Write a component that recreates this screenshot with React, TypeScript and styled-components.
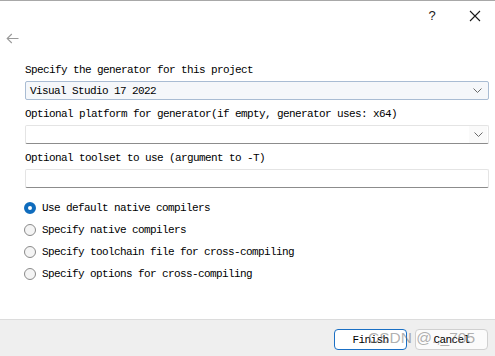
import styled, { createGlobalStyle } from "styled-components";

const GlobalStyle = createGlobalStyle`
  html, body {
    margin: 0;
    padding: 0;
    background: #ffffff;
  }
  * {
    box-sizing: border-box;
  }
`;

const mono = `"Liberation Mono", "DejaVu Sans Mono", monospace`;

export default function App() {
  const options = [
    "Use default native compilers",
    "Specify native compilers",
    "Specify toolchain file for cross-compiling",
    "Specify options for cross-compiling",
  ];

  return (
    <Window>
      <GlobalStyle />
      <TitleBar>
        <HelpButton>?</HelpButton>
        <CloseButton>
          <svg width="12" height="12" viewBox="0 0 12 12">
            <path d="M1 1 L11 11 M11 1 L1 11" stroke="#1a1a1a" strokeWidth="1.1" fill="none" />
          </svg>
        </CloseButton>
      </TitleBar>

      <BackRow>
        <svg width="13" height="11" viewBox="0 0 13 11">
          <path d="M12.5 5.5 H1.2 M5.8 1 L1.2 5.5 L5.8 10" stroke="#9a9a9a" strokeWidth="1.1" fill="none" />
        </svg>
      </BackRow>

      <Content>
        <Field>
          <Label>Specify the generator for this project</Label>
          <Select focused>
            <span>Visual Studio 17 2022</span>
            <Chevron />
          </Select>
        </Field>

        <Field>
          <Label>Optional platform for generator(if empty, generator uses: x64)</Label>
          <Select>
            <span />
            <DropButton>
              <Chevron />
            </DropButton>
          </Select>
        </Field>

        <Field>
          <Label>Optional toolset to use (argument to -T)</Label>
          <TextInput />
        </Field>

        <RadioList>
          {options.map((o, i) => (
            <RadioRow key={o}>
              <RadioDot checked={i === 0} />
              <RadioText>{o}</RadioText>
            </RadioRow>
          ))}
        </RadioList>
      </Content>

      <Footer>
        <Button primary>Finish</Button>
        <Button>Cancel</Button>
        <Watermark>CSDN @.,_705</Watermark>
      </Footer>
    </Window>
  );
}

const Chevron = () => (
  <svg width="9" height="5" viewBox="0 0 9 5">
    <path d="M0.5 0.5 L4.5 4.5 L8.5 0.5" stroke="#6a6a6a" strokeWidth="1" fill="none" />
  </svg>
);

const Window = styled.div`
  width: 495px;
  height: 356px;
  display: flex;
  flex-direction: column;
  border-top: 1px solid #a8a8a8;
  background: #ffffff;
  overflow: hidden;
`;

const TitleBar = styled.div`
  height: 29px;
  display: flex;
  justify-content: flex-end;
  align-items: center;
  padding-right: 8px;
`;

const HelpButton = styled.div`
  width: 34px;
  text-align: center;
  font-family: "Liberation Sans", Arial, sans-serif;
  font-size: 13px;
  color: #1a1a1a;
  margin-right: 14px;
`;

const CloseButton = styled.div`
  width: 24px;
  display: flex;
  justify-content: center;
  align-items: center;
`;

const BackRow = styled.div`
  height: 16px;
  display: flex;
  align-items: center;
  padding-left: 6px;
`;

const Content = styled.div`
  flex: 1;
  padding: 17px 6px 0 25px;
  display: flex;
  flex-direction: column;
  gap: 7px;
`;

const Field = styled.div`
  display: flex;
  flex-direction: column;
  gap: 4px;
`;

const Label = styled.div`
  font-family: ${mono};
  font-size: 11px;
  letter-spacing: -0.6px;
  line-height: 14px;
  color: #000000;
  white-space: nowrap;
`;

const Select = styled.div<{ focused?: boolean }>`
  height: 19px;
  display: flex;
  align-items: center;
  justify-content: space-between;
  padding-left: 4px;
  padding-right: ${(p) => (p.focused ? "6px" : "0")};
  font-family: ${mono};
  font-size: 11px;
  letter-spacing: -0.6px;
  color: #000000;
  background: ${(p) => (p.focused ? "#f5f7fa" : "#ffffff")};
  border: 1px solid ${(p) => (p.focused ? "#a9bcd3" : "#e4e4e4")};
  border-bottom-color: ${(p) => (p.focused ? "#a9bcd3" : "#8c8c8c")};
  border-radius: 2px;
`;

const DropButton = styled.div`
  width: 18px;
  height: 100%;
  display: flex;
  align-items: center;
  justify-content: center;
  background: #fafafa;
  margin-right: 1px;
`;

const TextInput = styled.div`
  height: 19px;
  background: #ffffff;
  border: 1px solid #e4e4e4;
  border-bottom-color: #8c8c8c;
  border-radius: 2px;
`;

const RadioList = styled.div`
  margin-top: 2px;
  display: flex;
  flex-direction: column;
`;

const RadioRow = styled.div`
  height: 22px;
  display: flex;
  align-items: center;
  gap: 6px;
  margin-left: -1px;
`;

const RadioDot = styled.div<{ checked?: boolean }>`
  width: 12px;
  height: 12px;
  border-radius: 50%;
  border: ${(p) => (p.checked ? "4px solid #0f6cbd" : "1px solid #8a8a8a")};
  background: ${(p) => (p.checked ? "#ffffff" : "#f4f4f4")};
`;

const RadioText = styled.span`
  font-family: ${mono};
  font-size: 11px;
  letter-spacing: -0.6px;
  color: #000000;
`;

const Footer = styled.div`
  position: relative;
  height: 37px;
  background: #efefef;
  border-top: 1px solid #dcdcdc;
  display: flex;
  justify-content: flex-end;
  align-items: flex-start;
  gap: 8px;
  padding: 9px 7px 0 0;
`;

const Button = styled.div<{ primary?: boolean }>`
  width: 73px;
  height: 21px;
  display: flex;
  align-items: center;
  justify-content: center;
  font-family: ${mono};
  font-size: 11px;
  letter-spacing: -0.6px;
  color: #000000;
  background: ${(p) => (p.primary ? "#ffffff" : "#fbfbfb")};
  border: 1px solid ${(p) => (p.primary ? "#1a6fc4" : "#d0d0d0")};
  border-radius: 4px;
`;

const Watermark = styled.div`
  position: absolute;
  left: 368px;
  top: 9px;
  font-family: "Liberation Sans", Arial, sans-serif;
  font-size: 15.5px;
  color: rgba(110, 110, 110, 0.55);
  pointer-events: none;
  white-space: nowrap;
`;
